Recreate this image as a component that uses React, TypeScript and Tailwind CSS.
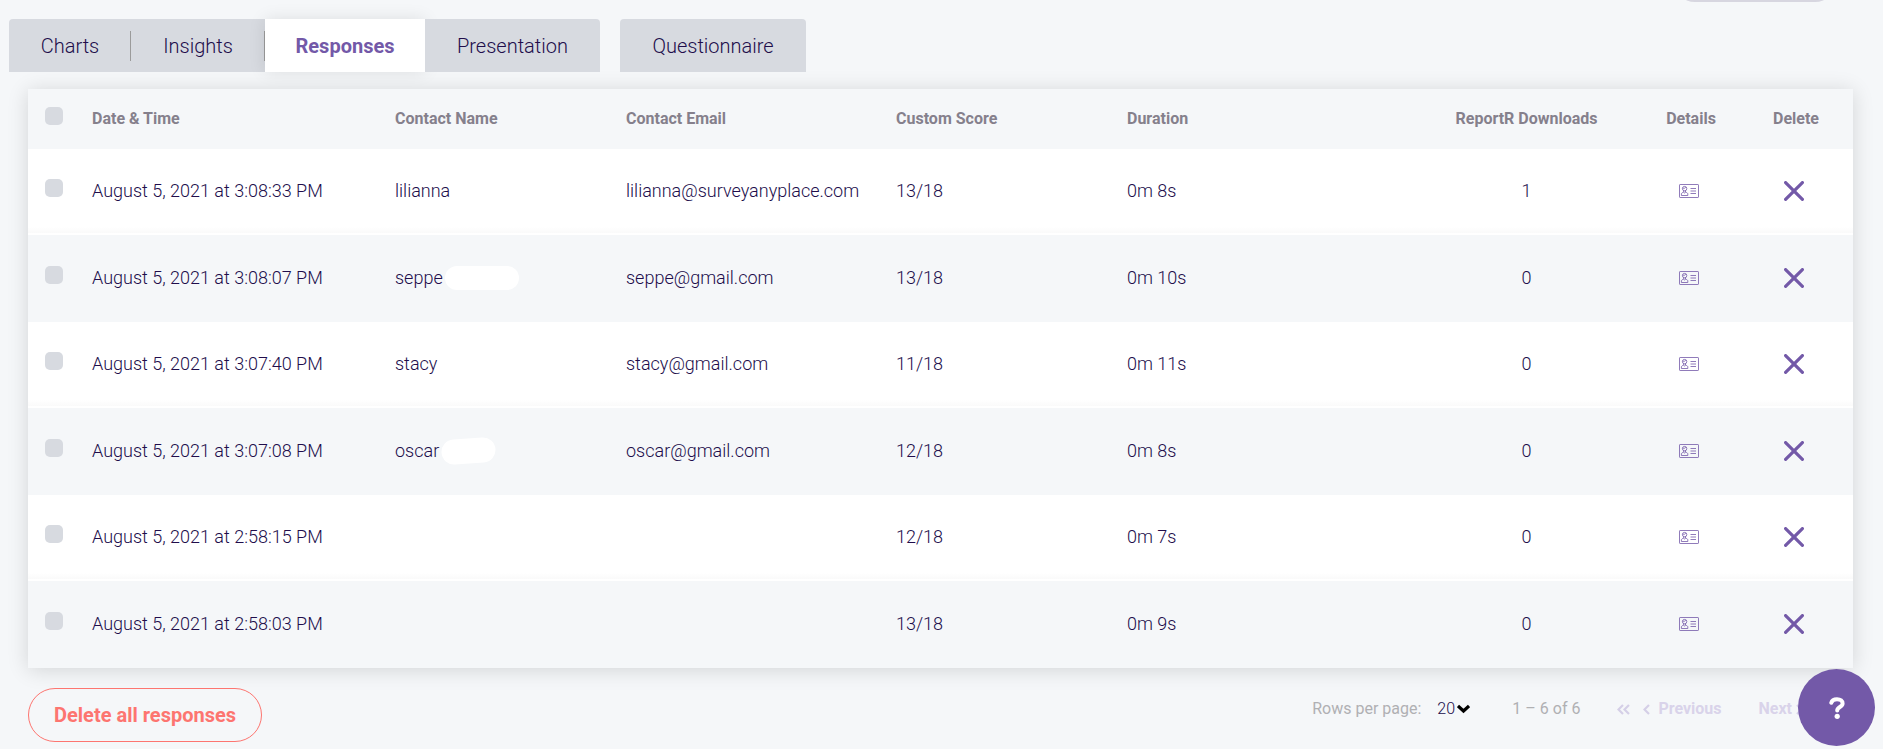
import { useState } from "react";
import clsx from "clsx";

interface Response {
  date: string;
  name: string;
  email: string;
  score: string;
  duration: string;
  downloads: number;
  redacted?: "long" | "short";
}

const RESPONSES: Response[] = [
  { date: "August 5, 2021 at 3:08:33 PM", name: "lilianna", email: "lilianna@surveyanyplace.com", score: "13/18", duration: "0m 8s", downloads: 1 },
  { date: "August 5, 2021 at 3:08:07 PM", name: "seppe", email: "seppe@gmail.com", score: "13/18", duration: "0m 10s", downloads: 0, redacted: "long" },
  { date: "August 5, 2021 at 3:07:40 PM", name: "stacy", email: "stacy@gmail.com", score: "11/18", duration: "0m 11s", downloads: 0 },
  { date: "August 5, 2021 at 3:07:08 PM", name: "oscar", email: "oscar@gmail.com", score: "12/18", duration: "0m 8s", downloads: 0, redacted: "short" },
  { date: "August 5, 2021 at 2:58:15 PM", name: "", email: "", score: "12/18", duration: "0m 7s", downloads: 0 },
  { date: "August 5, 2021 at 2:58:03 PM", name: "", email: "", score: "13/18", duration: "0m 9s", downloads: 0 },
];

function Tabs() {
  const [active, setActive] = useState("Responses");

  const tabClass = (name: string) =>
    clsx(
      "relative h-full text-xl",
      active === name
        ? "bg-white font-bold text-[#7359a8] shadow-[0_0_16px_rgba(0,0,0,0.1)]"
        : "bg-[#d7dae0] font-light text-[#210d4b]",
    );

  return (
    <nav className="flex h-[53px] pl-[9px]">
      <button
        className={clsx(tabClass("Charts"), "w-[122px] rounded-tl")}
        onClick={() => setActive("Charts")}
      >
        Charts
        <span className="absolute top-3 right-0 h-[30px] w-px bg-[#9b9b9b]" />
      </button>
      <button
        className={clsx(tabClass("Insights"), "w-[134px]")}
        onClick={() => setActive("Insights")}
      >
        Insights
        <span className="absolute top-3 right-0 h-[30px] w-px bg-[#9b9b9b]" />
      </button>
      <button
        className={clsx(tabClass("Responses"), "w-[160px]")}
        onClick={() => setActive("Responses")}
      >
        Responses
      </button>
      <button
        className={clsx(tabClass("Presentation"), "w-[175px] rounded-tr")}
        onClick={() => setActive("Presentation")}
      >
        Presentation
      </button>
      <button
        className={clsx(tabClass("Questionnaire"), "ml-5 w-[186px] rounded-t")}
        onClick={() => setActive("Questionnaire")}
      >
        Questionnaire
      </button>
    </nav>
  );
}

function CheckBox({ label }: { label: string }) {
  return (
    <input
      type="checkbox"
      aria-label={label}
      className="mb-1.5 ml-[17px] block size-[18px] appearance-none rounded-[5px] bg-[#d7dae0] checked:bg-[#7359a8]"
    />
  );
}

function CardIcon() {
  return (
    <svg width="20" height="14" viewBox="0 0 20 14" fill="none" stroke="#7359a8" strokeWidth="0.8">
      <rect x="0.5" y="0.5" width="19" height="13" rx="0.6" />
      <circle cx="5.6" cy="4.6" r="2.2" />
      <path d="M3.600 4.200c1.400.4 2.600 0 3.200-1M4.700 6.800v1.400l.9.8.9-.8V6.800" />
      <path d="M4.700 8.200C3.200 8.600 2.400 9 2.400 10v1.500h6.400V10c0-1-.8-1.400-2.300-1.800" />
      <path d="M11.500 4.500h5.500M11.500 7h5.500M11.500 9.500h5.500" />
    </svg>
  );
}

function CrossIcon() {
  return (
    <svg width="20" height="20" viewBox="0 0 20 20" stroke="#7359a8" strokeWidth="3.2" strokeLinecap="round">
      <path d="M1.6 1.6l16.8 16.8M18.4 1.6L1.6 18.4" />
    </svg>
  );
}

function ResponsesTable() {
  return (
    <table className="w-full table-fixed border-collapse text-left text-lg font-light shadow-[0_2px_20px_rgba(0,0,0,0.14)]">
      <colgroup>
        <col className="w-[64px]" />
        <col className="w-[303px]" />
        <col className="w-[231px]" />
        <col className="w-[270px]" />
        <col className="w-[231px]" />
        <col className="w-[287px]" />
        <col className="w-[225px]" />
        <col className="w-[100px]" />
        <col className="w-[114px]" />
      </colgroup>
      <thead className="bg-[#f5f7f9] text-base text-[#85808c]">
        <tr className="h-[60px]">
          <th>
            <CheckBox label="Select all responses" />
          </th>
          <th>Date &amp; Time</th>
          <th>Contact Name</th>
          <th>Contact Email</th>
          <th>Custom Score</th>
          <th>Duration</th>
          <th className="text-center">ReportR Downloads</th>
          <th className="pl-1 text-center">Details</th>
          <th className="text-center">Delete</th>
        </tr>
      </thead>
      <tbody>
        {RESPONSES.map((row) => (
          <tr
            key={row.date}
            className="h-[86px] odd:bg-white odd:bg-[linear-gradient(to_top,#fff_2px,#fafafa_2px,#fff_8px)] even:h-[87px] even:bg-[#f5f7f9] last:h-[86px] [&>td]:pb-0.5"
          >
            <td>
              <CheckBox label={`Select response from ${row.date}`} />
            </td>
            <td>{row.date}</td>
            <td>
              <div className="flex items-center">
                {row.name}
                {row.redacted === "long" && (
                  <span className="ml-0.5 h-6 w-[74px] rounded-full bg-white" />
                )}
                {row.redacted === "short" && (
                  <svg className="-my-1 ml-0.5" width="55" height="28" viewBox="0 0 55 28">
                    <path d="M13 15L42 13" stroke="#fff" strokeWidth="25" strokeLinecap="round" />
                  </svg>
                )}
              </div>
            </td>
            <td>{row.email}</td>
            <td>{row.score}</td>
            <td>{row.duration}</td>
            <td className="text-center">{row.downloads}</td>
            <td>
              <button aria-label="Details" className="mx-auto block">
                <CardIcon />
              </button>
            </td>
            <td className="pr-1">
              <button aria-label="Delete" className="mx-auto block">
                <CrossIcon />
              </button>
            </td>
          </tr>
        ))}
      </tbody>
    </table>
  );
}

function Pagination() {
  return (
    <div className="mr-[50px] flex h-[42px] items-center text-base text-[#b0b0b3]">
      <label htmlFor="rows">Rows per page:</label>
      <div className="relative ml-4 flex items-center">
        <select id="rows" className="w-[33px] appearance-none font-light text-[#210d4b]">
          <option>20</option>
        </select>
        <svg className="pointer-events-none absolute right-0" width="13" height="10" viewBox="0 0 13 10" fill="none" stroke="#000" strokeWidth="3.2">
          <path d="M1 2l5.5 5L12 2" />
        </svg>
      </div>
      <span className="ml-[42px]">1 – 6 of 6</span>
      <button aria-label="First page" className="ml-[37px]">
        <svg width="13" height="11" viewBox="0 0 13 11" fill="none" stroke="#d5cfe7" strokeWidth="2.2">
          <path d="M6 1L1.5 5.5 6 10M12 1L7.5 5.5 12 10" />
        </svg>
      </button>
      <button className="ml-[13px] flex items-center gap-2 font-bold text-[#d9d3ea]">
        <svg width="7" height="11" viewBox="0 0 7 11" fill="none" stroke="#d5cfe7" strokeWidth="2.2">
          <path d="M6 1L1.5 5.5 6 10" />
        </svg>
        Previous
      </button>
      <button className="ml-[37px] flex items-center gap-1 font-bold text-[#d9d3ea]">
        Next
        <svg width="7" height="11" viewBox="0 0 7 11" fill="none" stroke="#d5cfe7" strokeWidth="2.2">
          <path d="M1 1l4.5 4.5L1 10" />
        </svg>
      </button>
    </div>
  );
}

export default function App() {
  return (
    <div className="relative min-h-screen overflow-hidden bg-[#f5f7f9] font-[Roboto,sans-serif] text-[#210d4b]">
      <div className="absolute -top-10 right-[47px] h-[42px] w-[162px] rounded-full bg-[#d7d6e0]" />
      <div className="pt-[19px]">
        <Tabs />
      </div>
      <main className="mt-[17px] pr-[30px] pl-7">
        <ResponsesTable />
        <div className="mt-5 flex items-start justify-between">
          <button className="h-[54px] rounded-full border border-[#fd7570] px-[25px] text-xl font-bold text-[#fd7570]">
            Delete all responses
          </button>
          <Pagination />
        </div>
      </main>
      <button
        aria-label="Help"
        className="fixed right-2 bottom-[3px] z-20 flex size-[77px] items-center justify-center rounded-full bg-[#7359a8]"
      >
        <svg width="16" height="22" viewBox="0 0 16 22" fill="none" stroke="#fff" strokeWidth="4">
          <path d="M2.3 5.8C3 3.200 5.300 2.200 8 2.200c3.500 0 5.600 1.800 5.600 4.300 0 3.500-5.400 3.500-5.400 7" strokeLinecap="round" />
          <circle cx="8.2" cy="19.3" r="2.6" fill="#fff" stroke="none" />
        </svg>
      </button>
    </div>
  );
}
